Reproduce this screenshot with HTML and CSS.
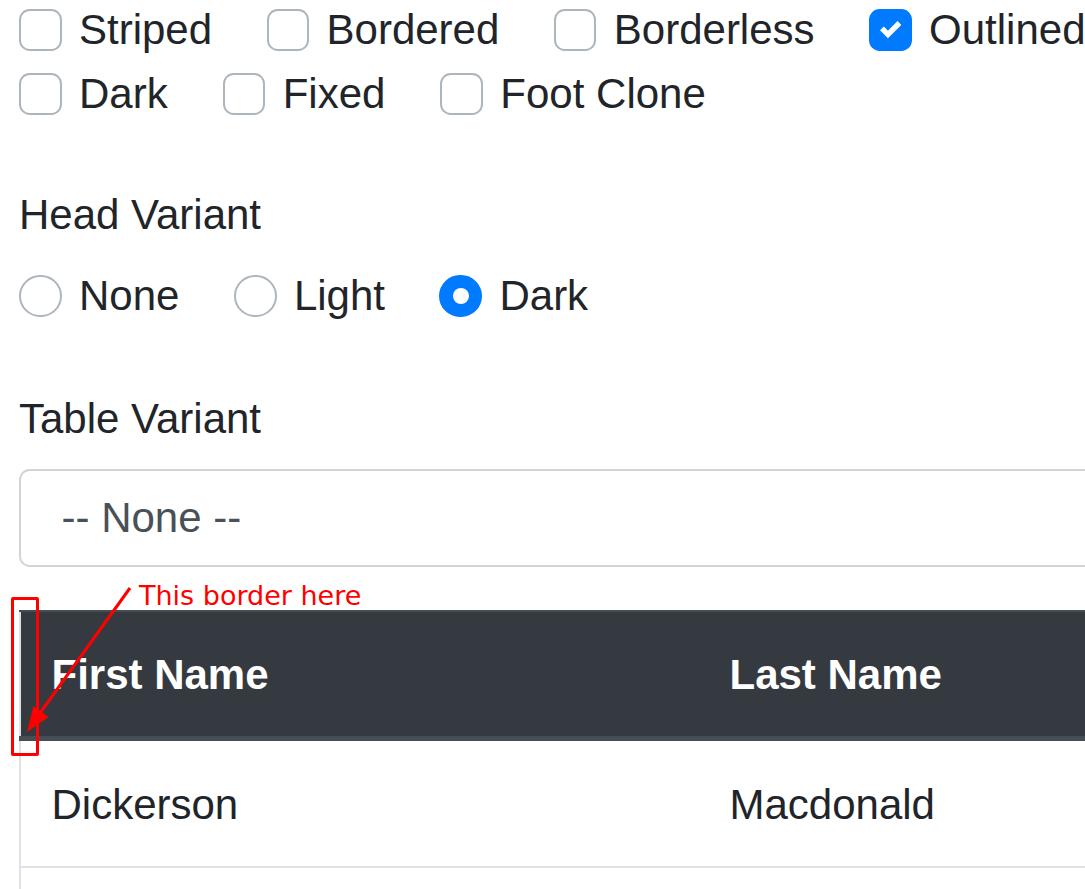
FILE: index.html
```html
<!DOCTYPE html>
<html lang="en">
<head>
<meta charset="utf-8">
<title>Table options</title>
<link rel="stylesheet" href="styles.css">
</head>
<body>
<div class="page">
  <div class="checks">
    <div class="control-row">
      <label class="control"><span class="box"></span><span class="label-text">Striped</span></label>
      <label class="control"><span class="box"></span><span class="label-text">Bordered</span></label>
      <label class="control"><span class="box"></span><span class="label-text">Borderless</span></label>
      <label class="control"><span class="box box-checked"><svg class="check-icon" viewBox="0 0 8 8" width="21.33" height="21.33"><path fill="#fff" d="M6.564.75l-3.59 3.612-1.538-1.55L0 4.26l2.974 2.99L8 2.193z"/></svg></span><span class="label-text">Outlined</span></label>
    </div>
    <div class="control-row">
      <label class="control"><span class="box"></span><span class="label-text">Dark</span></label>
      <label class="control"><span class="box"></span><span class="label-text">Fixed</span></label>
      <label class="control"><span class="box"></span><span class="label-text">Foot Clone</span></label>
    </div>
  </div>

  <div class="group group-radios">
    <div class="group-label">Head Variant</div>
    <div class="control-row">
      <label class="control"><span class="box radio"></span><span class="label-text">None</span></label>
      <label class="control"><span class="box radio"></span><span class="label-text">Light</span></label>
      <label class="control"><span class="box radio radio-checked"><span class="dot"></span></span><span class="label-text">Dark</span></label>
    </div>
  </div>

  <div class="group group-select">
    <div class="group-label">Table Variant</div>
    <div class="select">-- None --</div>
  </div>

  <table class="data-table">
    <colgroup>
      <col class="col-first">
      <col class="col-last">
      <col class="col-age">
    </colgroup>
    <thead>
      <tr><th>First Name</th><th>Last Name</th><th>Age</th></tr>
    </thead>
    <tbody>
      <tr><td>Dickerson</td><td>Macdonald</td><td>40</td></tr>
      <tr><td>Larsen</td><td>Shaw</td><td>21</td></tr>
    </tbody>
  </table>

  <div class="note-text">This border here</div>
  <div class="note-box"></div>
  <svg class="note-arrow" width="160" height="170" viewBox="0 580 160 170">
    <line x1="130" y1="590" x2="40" y2="715" stroke="#ff0000" stroke-width="3"/>
    <polygon points="27,734 48.5,719 33.5,708" fill="#ff0000"/>
  </svg>
</div>
</body>
</html>
```

FILE: styles.css
```css
html, body {
  margin: 0;
  padding: 0;
  overflow: hidden;
  background: #ffffff;
}

body {
  font-family: "Liberation Sans", Arial, sans-serif;
  font-size: 42px;
  line-height: 64px;
  color: #212529;
}

.page {
  position: relative;
  width: 2000px;
  padding-left: 19px;
}

.checks {
  margin-top: -2px;
  margin-bottom: 57px;
}

.control-row {
  display: flex;
  gap: 54.5px;
}

.checks .control-row + .control-row {
  gap: 55px;
}

.control {
  display: flex;
  align-items: flex-start;
  height: 64px;
}

.box {
  box-sizing: border-box;
  width: 42.67px;
  height: 42.67px;
  margin-top: 10.67px;
  margin-right: 17.33px;
  border: 2.67px solid #adb5bd;
  border-radius: 10.67px;
  background: #ffffff;
  display: flex;
  align-items: center;
  justify-content: center;
}

.box-checked {
  background: #007bff;
  border-color: #007bff;
}

.check-icon {
  display: block;
}

.radio {
  border-radius: 50%;
}

.radio-checked {
  background: #007bff;
  border-color: #007bff;
}

.dot {
  width: 16px;
  height: 16px;
  border-radius: 50%;
  background: #ffffff;
}

.group-label {
  height: 64px;
  margin-bottom: 17px;
}

.group-radios {
  margin-bottom: 59px;
}

.group-select .group-label {
  margin-bottom: 18px;
}

.group-select {
  margin-bottom: 43px;
}

.select {
  box-sizing: border-box;
  width: 1800px;
  height: 98px;
  border: 2.67px solid #ced4da;
  border-radius: 10.67px;
  padding-left: 40.5px;
  line-height: 94px;
  color: #495057;
}

.data-table {
  border-collapse: collapse;
  table-layout: fixed;
  width: 2040px;
  border: 2.67px solid #dee2e6;
}

.col-first { width: 679px; }
.col-last { width: 680px; }
.col-age { width: 680px; }

.data-table th,
.data-table td {
  text-align: left;
  padding: 30px 30.5px;
  line-height: 64px;
  vertical-align: top;
}

.data-table th {
  background: #343a40;
  color: #ffffff;
  font-weight: bold;
  padding-top: 31px;
  padding-bottom: 29px;
  border-top: 2px solid #454d55;
  border-bottom: 5px solid #454d55;
}

.data-table td {
  padding-top: 32px;
  padding-bottom: 29px;
  border-top: 2.67px solid #dee2e6;
}

.note-text {
  position: absolute;
  left: 139px;
  top: 580px;
  font-family: "DejaVu Sans", Verdana, sans-serif;
  font-size: 27px;
  line-height: 36px;
  color: #ff0000;
}

.note-box {
  position: absolute;
  left: 11px;
  top: 599px;
  width: 28px;
  height: 159px;
  box-sizing: border-box;
  border: 3px solid #ff0000;
  border-radius: 2px;
}

.note-arrow {
  position: absolute;
  left: 0;
  top: 580px;
  overflow: visible;
}
```
